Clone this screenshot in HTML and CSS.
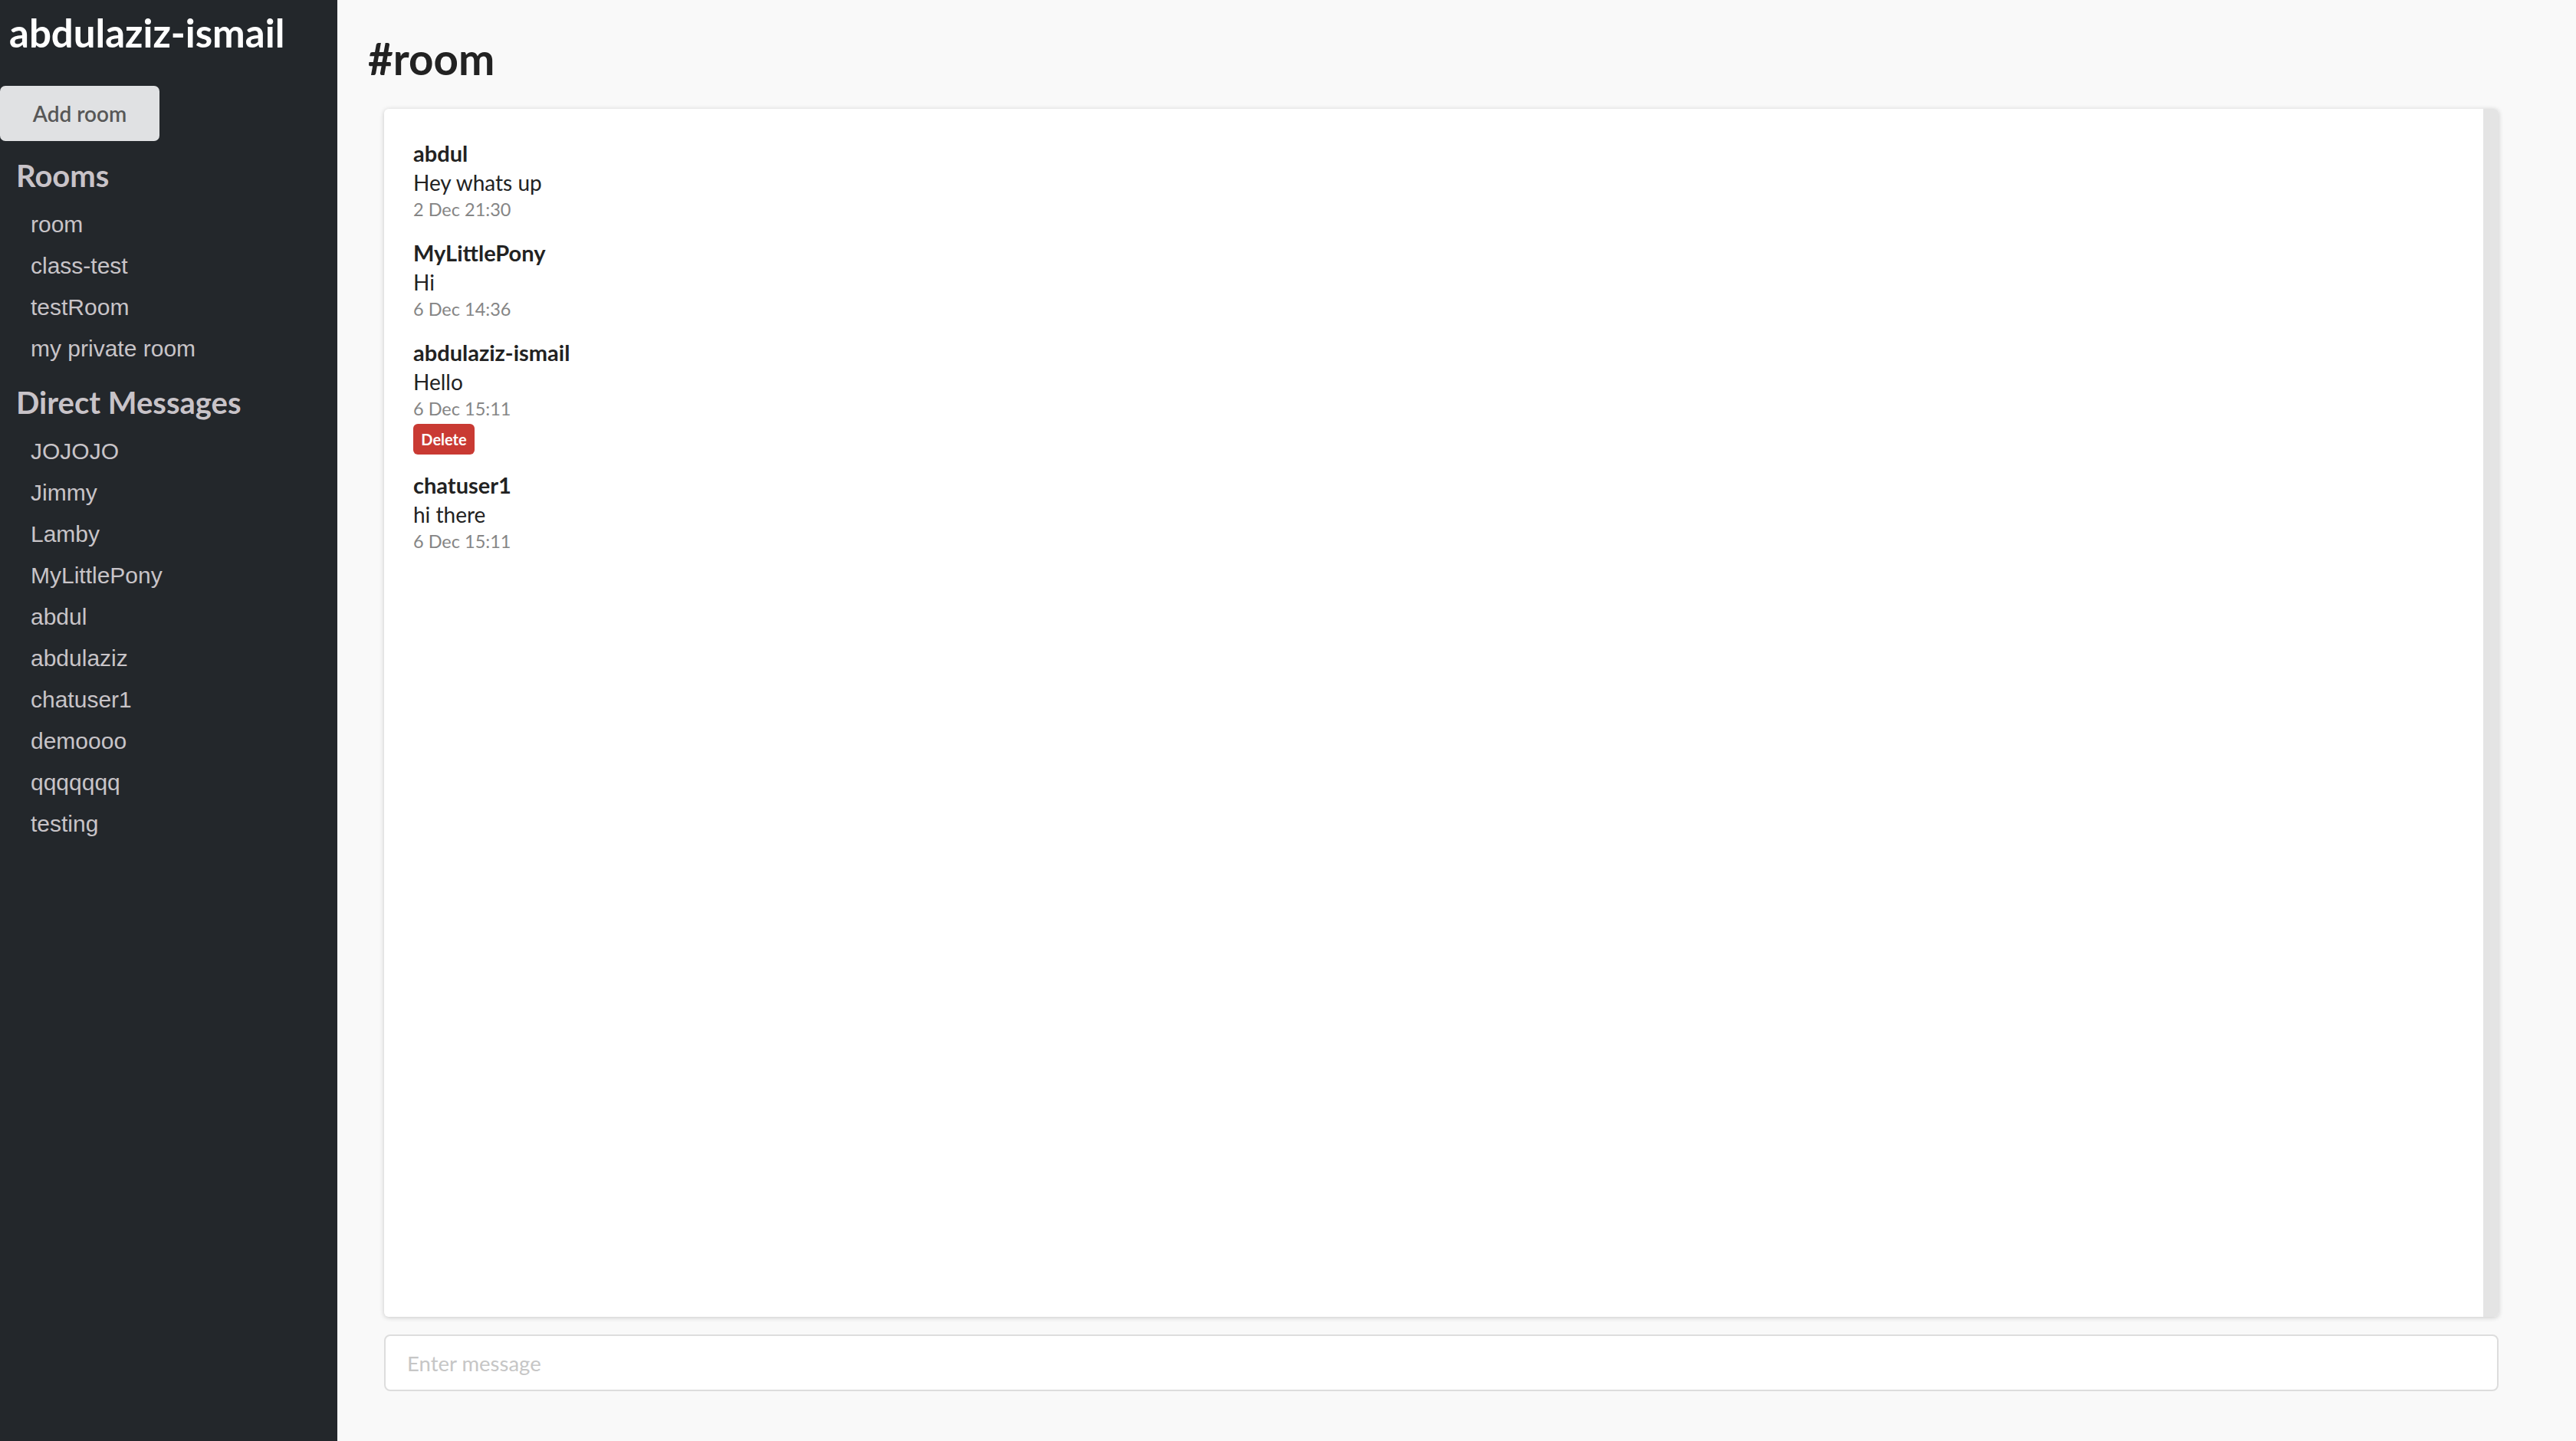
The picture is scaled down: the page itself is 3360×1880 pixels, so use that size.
FILE: index.html
```html
<!DOCTYPE html>
<html lang="en">
<head>
<meta charset="utf-8">
<title>#room</title>
<link rel="stylesheet" href="styles.css">
</head>
<body>
<div class="app">
  <aside class="sidebar">
    <h1 class="user-name">abdulaziz-ismail</h1>
    <button class="add-room" type="button">Add room</button>
    <h2 class="section-title">Rooms</h2>
    <ul class="nav-list">
      <li>room</li>
      <li>class-test</li>
      <li>testRoom</li>
      <li>my private room</li>
    </ul>
    <h2 class="section-title">Direct Messages</h2>
    <ul class="nav-list">
      <li>JOJOJO</li>
      <li>Jimmy</li>
      <li>Lamby</li>
      <li>MyLittlePony</li>
      <li>abdul</li>
      <li>abdulaziz</li>
      <li>chatuser1</li>
      <li>demoooo</li>
      <li>qqqqqqq</li>
      <li>testing</li>
    </ul>
  </aside>
  <main class="main">
    <h1 class="room-title">#room</h1>
    <div class="chat">
      <div class="messages-card">
        <div class="messages">
          <div class="message">
            <div class="author">abdul</div>
            <div class="text">Hey whats up</div>
            <div class="time">2 Dec 21:30</div>
          </div>
          <div class="message">
            <div class="author">MyLittlePony</div>
            <div class="text">Hi</div>
            <div class="time">6 Dec 14:36</div>
          </div>
          <div class="message">
            <div class="author">abdulaziz-ismail</div>
            <div class="text">Hello</div>
            <div class="time">6 Dec 15:11</div>
            <button class="delete" type="button">Delete</button>
          </div>
          <div class="message">
            <div class="author">chatuser1</div>
            <div class="text">hi there</div>
            <div class="time">6 Dec 15:11</div>
          </div>
        </div>
        <div class="scroll-gutter"></div>
      </div>
      <input class="message-input" type="text" placeholder="Enter message">
    </div>
  </main>
</div>
</body>
</html>
```

FILE: styles.css
```css
* { box-sizing: border-box; }

html, body {
  margin: 0;
  padding: 0;
  height: 100%;
}

body {
  font-family: Lato, "Open Sans", sans-serif;
  background: #f9f9f9;
}

.app {
  display: flex;
  height: 1880px;
}

/* Sidebar */
.sidebar {
  width: 440px;
  flex: 0 0 440px;
  background: #23272b;
  display: flex;
  flex-direction: column;
  align-items: flex-start;
}

.user-name {
  margin: 13px 0 0 12px;
  font-size: 51px;
  line-height: 60px;
  font-weight: 700;
  color: #ffffff;
}

.add-room {
  margin-top: 39px;
  width: 208px;
  height: 72px;
  border: none;
  border-radius: 7px;
  background: #e0e1e3;
  color: #575757;
  font-family: Lato, sans-serif;
  font-size: 28px;
  font-weight: 600;
  padding: 0;
}

.section-title {
  margin: 21px 0 0 21px;
  font-size: 40px;
  line-height: 48px;
  font-weight: 700;
  color: #c8c3c8;
}

.nav-list + .section-title {
  margin-top: 19px;
}

.nav-list {
  list-style: none;
  margin: 13px 0 0 0;
  padding: 0 0 0 40px;
}

.nav-list li {
  font-family: "Liberation Sans", Arial, sans-serif;
  font-size: 30px;
  line-height: 54px;
  color: #c8c4c8;
}

/* Main */
.main {
  flex: 1;
  display: flex;
  flex-direction: column;
  padding: 42px 101px 65px 40px;
  min-width: 0;
}

.room-title {
  margin: 0;
  font-size: 56.5px;
  line-height: 68px;
  font-weight: 700;
  color: #222222;
}

.chat {
  flex: 1;
  display: flex;
  flex-direction: column;
  gap: 23px;
  margin: 32px 0 0 21px;
  min-height: 0;
}

.messages-card {
  flex: 1;
  display: flex;
  background: #ffffff;
  border-radius: 6px;
  overflow: hidden;
  box-shadow: 0 1px 6px rgba(0, 0, 0, 0.2);
}

.messages {
  flex: 1;
  padding: 39px 38px;
}

.scroll-gutter {
  width: 20px;
  flex: 0 0 20px;
  background: #e4e4e4;
}

.message {
  margin-bottom: 21px;
  color: #222222;
}

.author {
  font-size: 29px;
  line-height: 38px;
  font-weight: 700;
}

.text {
  font-size: 28px;
  line-height: 38px;
}

.time {
  font-size: 23.5px;
  line-height: 33px;
  color: #858585;
}

.delete {
  display: block;
  margin-top: 3px;
  width: 80px;
  height: 40px;
  padding: 0;
  border: none;
  border-radius: 6px;
  background: #c93a33;
  color: #ffffff;
  font-family: Lato, sans-serif;
  font-size: 20px;
  font-weight: 700;
}

.message-input {
  height: 74px;
  width: 100%;
  border: 2px solid #dddddd;
  border-radius: 8px;
  background: #ffffff;
  padding: 0 28px;
  font-family: Lato, sans-serif;
  font-size: 27.5px;
  color: #222222;
  outline: none;
}

.message-input::placeholder {
  color: #c6c6c6;
}
```
